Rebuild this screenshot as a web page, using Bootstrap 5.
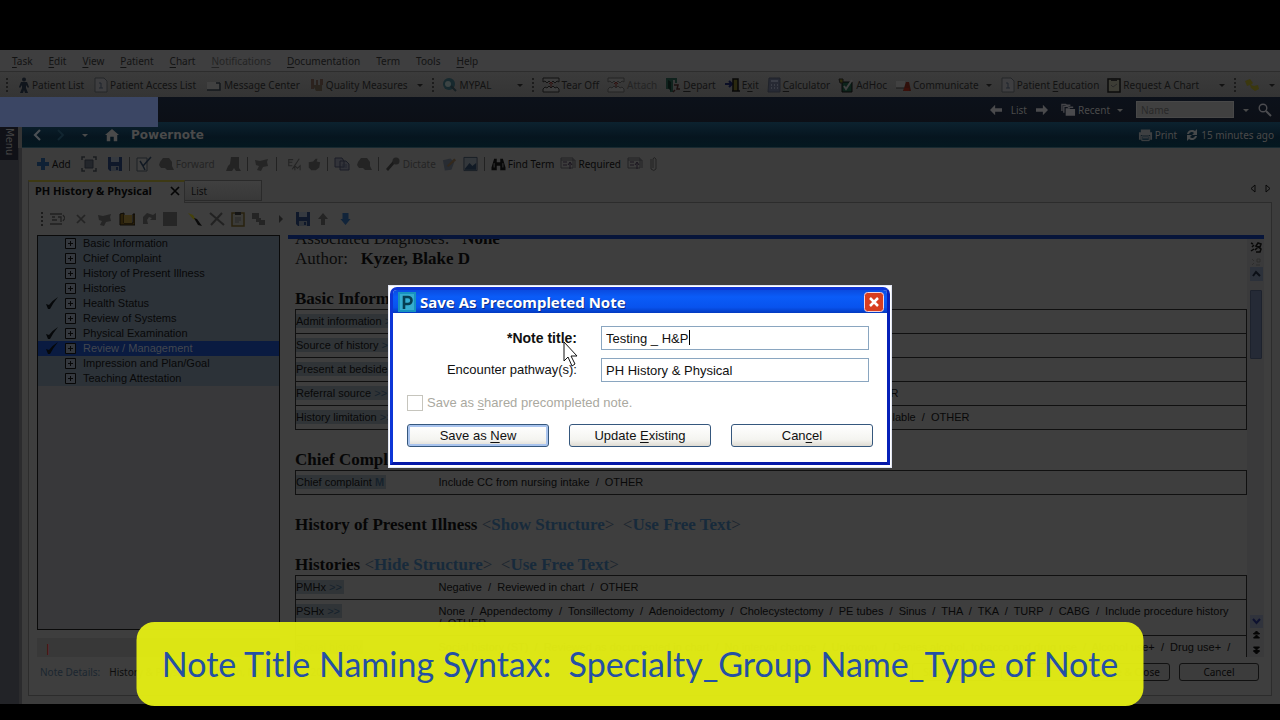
<!DOCTYPE html>
<html lang="en">
<head>
<meta charset="utf-8">
<meta name="viewport" content="width=device-width, initial-scale=1">
<title>Powernote</title>
<link href="https://cdn.jsdelivr.net/npm/bootstrap@5.3.0/dist/css/bootstrap.min.css" rel="stylesheet">
<style>
body{background:#000;color:#0d0d0d;font:10px/16px "Noto Sans",sans-serif}
svg{display:block;flex:none}
a{color:inherit;text-decoration:none}
u{text-underline-offset:2px}
button{font:inherit;color:inherit;background:none;border:0;padding:0}
.screen{padding:50px 0 13px}
.app{background:#343434}
.menubar{height:22px;padding:0 12px;gap:16px;background:#3e3e3f;border-bottom:1px solid #2d2d2d;color:#131313}
.toolbar-main{height:25px;padding:0 4px 0 6px;background:linear-gradient(#3b3b3b,#343434);color:#121212;gap:8px}
.toolbar-main button,.flat{display:flex;align-items:center;gap:2px;white-space:nowrap}
.quick{gap:10px}
.off{color:#242424}
.grip{width:2px;height:14px;border-left:2px dotted #1c1c1c;flex:none}
.chartbar{height:25px;background:linear-gradient(#0c111a,#0c0f16);color:#4a4a4a}
.patient{width:158px;height:30px;background:#3b4664;z-index:2;position:relative}
.find{width:98px;height:17px;border:1px solid #484848;background:#404040;color:#111;padding:0 4px;font-size:10px;border-radius:0}
.find::placeholder{color:#292929}
.titlebar{height:26px;background:linear-gradient(#0c222f,#06151f 60%,#041820);color:#4a4a4a;border-bottom:1px solid #182a31;margin-left:22px;padding:0 6px 0 11px}
.titlebar h1{font:bold 12px/16px "DejaVu Sans",sans-serif;margin:0 0 0 12px}
.side{width:22px;background:#222327;border-right:3px solid #2b2b2d}
.side button{writing-mode:vertical-rl;background:#101117;color:#444;width:18px;height:36px;margin-top:-24px;font:10px/18px "DejaVu Sans",sans-serif;position:relative}
.work{background:#3c3c3c;padding:0 8px 8px 6px;min-width:0}
.actions{height:32px;padding-left:8px;gap:6px;color:#080808}
.sep{width:1px;height:14px;background:#222;flex:none}
.tabs{height:23px}
.tab-on{border:1px solid #2c2c2c;border-top:2px solid #3d3914;border-bottom:0;width:157px;padding:0 3px 4px 6px;font-weight:bold;font-size:11px;background:#3e3e3e;color:#050505}
.tab-off{border:1px solid #2a2a2a;border-left:0;width:77px;padding-left:6px;height:21px;background:linear-gradient(#404040,#383838)}
.rule{border-bottom:1px solid #2c2c2c}
.panel{border:1px solid #2c2c2c;border-top:0;padding:0 7px 0 8px;background:#3e3e3e;height:493px}
.tools{height:32px;gap:6px;padding-left:4px}
.tree{width:243px;height:395px;border:1px solid #0a0a0a;background:#38383a;font:11px/15px "Liberation Sans",sans-serif}
.tree li{height:15px;background:#2c3238;color:#080808;padding-left:7px}
.tree li.picked{background:#0a1b41;color:#43474f}
.tick{width:14px;margin-right:6px}
.box{width:11px;height:11px;margin-right:7px}
.entry{height:19px;margin-top:8px;width:243px;border:0;background:#383838;color:#600;padding:0 8px}
.doc{height:422px;border-top:4px solid #07153a;overflow:hidden;margin-left:8px;min-width:0;background:#3e3e3e}
.sheet{padding-left:7px;min-width:0;overflow:hidden}
.serif{font:17px/20px "Liberation Serif",serif;color:#0b0b0b;margin:0;white-space:pre}
.serif b{color:#060606}
.scrolled{margin-top:-10px}
.heading{font:bold 17px/20px "Liberation Serif",serif;margin:20px 0 0;color:#060606;white-space:pre}
.heading span{font-weight:normal;color:#1a242e}
.heading a{color:#172a3b;font-weight:bold}
.facts{width:100%;border-collapse:collapse;font:11px/12px "Liberation Sans",sans-serif;color:#080808}
.facts tr{border:1px solid #101010}
.facts td,.facts th{font-weight:normal;padding:5px 0 6px;height:23px;vertical-align:top}
.facts th{width:143px}
.facts td{padding-right:6px;white-space:pre-wrap}
.term{background:#303437;padding:1px 2px 1px 0}
.term i{font-style:normal;color:#16222c}
.upto{display:inline-block;width:460px;text-align:right}
.upto-wide{display:inline-block;width:531px;text-align:right}
.scroller{width:17px;padding:2px 2px 0 3px;background:#3a3a3b}
.thumb{height:69px;background:#252a36;border-radius:1px;margin-top:9px;border:1px solid #1d222d}
.foot{height:29px;padding:0 5px 0 3px;gap:9px}
.note-label{color:#1b2630}
.btn-foot{width:80px;height:18px;border:1px solid #111;border-radius:3px;background:#3c3c3c;color:#080808;font-size:10px;line-height:14px}
.dialog{position:absolute;top:285px;left:50%;transform:translateX(-50%);width:504px;height:183px;background:#fff;border:1px solid #dfe4f2;z-index:5;font:13px/18px "Liberation Sans",sans-serif;color:#111}
.frame{margin:1px;border:3px solid #0d35d6;border-bottom-color:#0518a8;border-right-color:#0620b8;border-radius:7px 7px 0 0;height:178px;background:#fff}
.caption-bar{height:23px;background:linear-gradient(#0a4be0,#0a5cf8 30%,#0853ee 75%,#0339c0);color:#fff;font:bold 15px/20px "Noto Sans",sans-serif;text-shadow:1px 1px #0a2b88;border-radius:4px 4px 0 0;padding:0 3px 0 5px}
.form-body{padding:13px 14px 0}
.field{height:24px;width:268px;border:1px solid #8aa6c0;border-radius:0;padding:0 4px;font:13px/20px "Liberation Sans",sans-serif;color:#111;background:#fff}
.title-label{font-size:14px}
.caret{position:absolute;left:88px;top:4px;width:1px;height:15px;background:#000}
.btn-xp{width:142px;height:23px;border:1px solid #35577d;border-radius:3px;background:linear-gradient(#fff,#f4f4f0 70%,#dedbd3);font:13px/19px "Liberation Sans",sans-serif;color:#111;padding:0}
.btn-xp.default{box-shadow:inset 0 0 0 2px #a9c4ee}
.shared{color:#aaa9a0;margin:12px 0}
.shared input{appearance:none;width:16px;height:16px;border:1px solid #c6c5bd;background:#fff;margin:0}
.pointer{position:absolute;left:174px;top:55px}
.banner{position:absolute;top:622px;left:50%;transform:translateX(-50%);width:1007px;height:84px;border-radius:18px;background:rgba(226,235,20,.97);color:#2450a4;font:34px/84px Lato,sans-serif;text-align:center;white-space:pre;z-index:6;margin:0}
</style>
</head>
<body>
<svg width="0" height="0" class="position-absolute" aria-hidden="true">
<symbol id="person" viewBox="0 0 12 16"><circle cx="6" cy="2.500" r="2" fill="#10151c"/><path d="M3 5h6l2 5-1 1-2-3v3l2 5H7l-1-3-1 3H2l2-5V8l-2 3-1-1z" fill="#10151c"/></symbol>
<symbol id="page" viewBox="0 0 14 16"><path d="M1 1h9l3 3v11H1z" fill="#3e3e40" stroke="#242629"/><path d="M5 6h2v5M5 11h4" stroke="#1f242c" fill="none"/></symbol>
<symbol id="mail" viewBox="0 0 16 16"><path d="M1 5h12v8H1z" fill="#414141"/><path d="M1 13h13V6M10 6h4" stroke="#15181d" stroke-width="1.500" fill="none"/></symbol>
<symbol id="bars" viewBox="0 0 14 16"><path d="M1 2h3v10H1zM6 3h2v9H6zM10 2h3v6h-3z" fill="#2c221e"/><path d="M3 8h9v6H6z" fill="#29241e"/></symbol>
<symbol id="globe" viewBox="0 0 16 16"><circle cx="7" cy="7" r="6" fill="#17292e"/><circle cx="6" cy="7" r="3" fill="#3c4444"/><path d="M9 9l5 5" stroke="#172024" stroke-width="2"/></symbol>
<symbol id="tear" viewBox="0 0 18 16"><path d="M1 5V1h16v4l-2-1-2 2-2-2-2 2-2-2-2 2-2-2zM1 15v-3l2-2 2 1 2-2 2 2 2-2 2 2 2-1 2 2v3z" fill="#3d3d3d" stroke="currentColor"/><path d="M9 5v5M7 7l2-2 2 2" stroke="#30110f" fill="none"/></symbol>
<symbol id="depart" viewBox="0 0 16 16"><path d="M1 1h11v5h-2V3H8v12H5v-3H1z" fill="#10221d"/><path d="M3 3l3 2v9l-3-3z" fill="#07120f"/><path d="M9 8h4l-1 4h3M10 13l-2 2" stroke="#1c1010" stroke-width="1.500" fill="none"/></symbol>
<symbol id="exit" viewBox="0 0 16 16"><path d="M1 7h6M5 4l3 3-3 3" stroke="#0b0e26" stroke-width="2" fill="none"/><path d="M9 2h5v12H9zM8 14h8" fill="#2b290f" stroke="#080808" stroke-width="1.500"/></symbol>
<symbol id="calc" viewBox="0 0 14 16"><path d="M2 1h11v14H1z" fill="#272a34" stroke="#20232a"/><path d="M4 4h7M4 8h1M7 8h1M10 8h1M4 11h1M7 11h1M10 11h1" stroke="#41444c" stroke-width="1.500"/></symbol>
<symbol id="adhoc" viewBox="0 0 16 16"><path d="M4 5h10v10H4z" fill="#0d231a" stroke="#080808"/><path d="M6 9l2 3 6-9" stroke="#424242" stroke-width="2" fill="none"/><path d="M1 2h4v4H2z" fill="#2e2c0c" stroke="#111"/></symbol>
<symbol id="comm" viewBox="0 0 16 16"><path d="M1 4h9v7H1z" fill="#414141"/><path d="M1 11h8" stroke="#191919"/><path d="M8 14h8l-2-9h-3z" fill="#30100b"/><path d="M9 11h5v3H9z" fill="#3b100a"/></symbol>
<symbol id="clip" viewBox="0 0 14 16"><path d="M1 2h12v13H1z" fill="#3d3d35" stroke="#0b0b0b" stroke-width="1.500"/><path d="M4 1h6v3H4z" fill="#151515"/><path d="M4 8l2 2 4-3" stroke="#292929" fill="none"/></symbol>
<symbol id="key" viewBox="0 0 16 16"><path d="M1 4l5-2 3 4-2 2 3 1 4-1 1 4-4 2-4-3-1-3-3 1z" fill="#3b380f"/></symbol>
<symbol id="arrL" viewBox="0 0 16 14"><path d="M1 7l6-6v4h8v4H7v4z" fill="#4a4a4c"/></symbol>
<symbol id="folders" viewBox="0 0 16 14"><path d="M5 5h4l1 1h5v7H5z" fill="#4a4a4d"/><path d="M3 10V3h4l1 1h5M1 8V1h4l1 1h4" stroke="#444448" stroke-width="1.500" fill="none"/></symbol>
<symbol id="down" viewBox="0 0 8 8"><path d="M1 3h6L4 6z" fill="currentColor"/></symbol>
<symbol id="search" viewBox="0 0 14 14"><circle cx="5" cy="5" r="3.800" fill="none" stroke="#4c4c50" stroke-width="1.400"/><path d="M8 8l5 5" stroke="#4c4c50" stroke-width="2"/></symbol>
<symbol id="home" viewBox="0 0 16 14"><path d="M8 0l8 7h-2v7h-4V9H6v5H2V7H0z" fill="#4a4a4a"/></symbol>
<symbol id="printer" viewBox="0 0 16 14"><path d="M3 4V1h10v3h2v8h-2V7H3v5H1V4z" fill="#3e4042"/><path d="M4 8h8v5H4zM5 10h6" fill="#12212b" stroke="#444"/></symbol>
<symbol id="refresh" viewBox="0 0 14 14"><path d="M2 6a5 5 0 0 1 8-3l2-2v6H7l2-2a3 3 0 0 0-5 1zM12 8a5 5 0 0 1-8 3l-2 2V7h5L5 9a3 3 0 0 0 5-1z" fill="#46494b"/></symbol>
<symbol id="plus" viewBox="0 0 14 14"><path d="M5 1h4v4h4v4H9v4H5V9H1V5h4z" fill="#0f2135"/></symbol>
<symbol id="fit" viewBox="0 0 16 16"><path d="M1 4V1h3M12 1h3v3M15 12v3h-3M4 15H1v-3" stroke="#1a1c1f" fill="none" stroke-width="1.500"/><path d="M4 4h8v8H4z" fill="#23262b" stroke="#181b20"/></symbol>
<symbol id="disk" viewBox="0 0 16 16"><path d="M1 1h14v14H3l-2-2z" fill="#0f182a"/><path d="M4 1h8v5H4z" fill="#363a40"/><path d="M4 10h8v5H4z" fill="#30343a"/><path d="M9 11h2v3H9z" fill="#0f182a"/></symbol>
<symbol id="edit" viewBox="0 0 16 16"><path d="M1 2h10v13H1z" fill="#404040" stroke="#1c2025"/><path d="M4 5l3 5 8-9M7 10l2 4" stroke="#111923" stroke-width="1.500" fill="none"/></symbol>
<symbol id="bubble" viewBox="0 0 16 16"><path d="M2 6l3-4h6l3 4v4l2 4H9l-2-2H3L1 9z" fill="#242424"/></symbol>
<symbol id="stamp" viewBox="0 0 16 16"><path d="M6 1h8v11l2 3h-5l-2-3-2 3H1l2-5 2-2z" fill="#232323"/></symbol>
<symbol id="flag" viewBox="0 0 16 16"><path d="M1 4l5 1 8-2-1 3 1 4-5 1-2 4-4-1 2-4-3-1z" fill="#252525"/></symbol>
<symbol id="em" viewBox="0 0 16 16"><path d="M7 3H2v7h4M2 6h4M14 2L6 14M9 15v-5l3 3 3-3v5" stroke="#242424" stroke-width="1.200" fill="none"/></symbol>
<symbol id="apple" viewBox="0 0 16 16"><path d="M2 6l5-1 3-3h2l-1 3 4 1-1 6-4 3H5l-3-3z" fill="#242424"/></symbol>
<symbol id="copy" viewBox="0 0 16 16"><path d="M1 2h7l2 3v6H1zM6 5h6l3 3v6H6z" fill="#323339" stroke="#1a1d26"/><path d="M8 9h5M8 11h5" stroke="#222631"/></symbol>
<symbol id="mic" viewBox="0 0 16 16"><path d="M1 13l7-8 2 2-7 8z" fill="#1b1b1b"/><circle cx="11" cy="5" r="3.500" fill="#222"/></symbol>
<symbol id="paint" viewBox="0 0 16 16"><path d="M1 4l8-2 4 4-3 8-7 1z" fill="#282c32"/><path d="M5 10L13 2l2 2-8 7z" fill="#33291d"/></symbol>
<symbol id="photo" viewBox="0 0 16 16"><path d="M1 1h14v14H1z" fill="#33373b" stroke="#191e25"/><path d="M2 13l5-6 3 3 4-3v7H2z" fill="#111a25"/></symbol>
<symbol id="binoc" viewBox="0 0 16 16"><path d="M3 2h3v4h4V2h3l3 10v3h-6v-5H6v5H0v-3z" fill="#080808"/><path d="M3 7v5M13 7v5" stroke="#3a3a3a"/></symbol>
<symbol id="req" viewBox="0 0 16 16"><path d="M1 2h12v10H1zM1 4h14v8" fill="none" stroke="#222224"/><path d="M3 6h4M3 9h4M10 13V7M8 9l2-3 2 3" stroke="#1a151f" fill="none"/></symbol>
<symbol id="pin" viewBox="0 0 10 16"><path d="M2 3v10q3 3 5 0V3Q5 0 4 3v9" fill="none" stroke="#222"/></symbol>
<symbol id="x" viewBox="0 0 12 12"><path d="M2 2l8 8M10 2l-8 8" stroke="currentColor" stroke-width="1.700"/></symbol>
<symbol id="gold" viewBox="0 0 16 16"><path d="M1 3l4-1v10h9V3h2v11H1z" fill="#2b210a" stroke="#0d0b06"/><path d="M5 4h8v8H5z" fill="#3a3015"/></symbol>
<symbol id="redo" viewBox="0 0 16 16"><path d="M2 13V6l4-4 6 2 3-2v7H9l2-2-3-1-2 3 1 4z" fill="#252525"/></symbol>
<symbol id="wand" viewBox="0 0 16 16"><path d="M1 2l5 2 3 5-3-1z" fill="#45420b"/><path d="M7 7l3 1 5 7-4-1z" fill="#0a0a0a"/></symbol>
<symbol id="cut" viewBox="0 0 16 16"><path d="M1 2l14 12M13 2L2 14" stroke="#222" stroke-width="2"/></symbol>
<symbol id="note" viewBox="0 0 14 16"><path d="M1 2h12v13H1z" fill="#3b3b38" stroke="#2a230f" stroke-width="1.500"/><path d="M4 1h6v3H4z" fill="#151515"/><path d="M4 7h6M4 9h6M4 11h4" stroke="#292929"/></symbol>
<symbol id="blocks" viewBox="0 0 16 16"><path d="M1 2h7v6H1zM8 9h6v5H8zM5 7h5v4H5z" fill="#242424"/></symbol>
<symbol id="up" viewBox="0 0 12 14"><path d="M6 1l5 6H8v6H4V7H1z" fill="currentColor"/></symbol>
<symbol id="check" viewBox="0 0 14 13"><path d="M1 7l3 1q4-5 9-8Q8 6 5 12L3 12z" fill="#06080a"/></symbol>
<symbol id="expand" viewBox="0 0 11 11"><path d="M.5.5h10v10H.5z" fill="#34383e" stroke="#070707"/><path d="M3 5.500h5M5.500 3v5" stroke="#070707"/></symbol>
<symbol id="structure" viewBox="0 0 16 16"><path d="M1 3h12M1 13h12M3 6h3M3 9h5M9 6h3v5M14 4l2 3-2 3" stroke="#202020" fill="none" stroke-width="1.300"/></symbol>
</svg>

<main class="screen position-relative">
<div class="app">
<nav class="menubar d-flex align-items-center">
<a href="#"><u>T</u>ask</a><a href="#"><u>E</u>dit</a><a href="#"><u>V</u>iew</a><a href="#"><u>P</u>atient</a><a href="#"><u>C</u>hart</a><a href="#" class="off"><u>N</u>otifications</a><a href="#"><u>D</u>ocumentation</a><a href="#">Term</a><a href="#">Tools</a><a href="#"><u>H</u>elp</a>
</nav>
<div class="toolbar-main d-flex align-items-center">
<div class="quick d-flex align-items-center">
<span class="grip"></span>
<button><svg width="12" height="16"><use href="#person"/></svg>Patient List</button>
<button><svg width="14" height="16"><use href="#page"/></svg>Patient Access List</button>
<button><svg width="16" height="16"><use href="#mail"/></svg>Message Center</button>
<button><svg width="14" height="16"><use href="#bars"/></svg>Quality Measures</button>
</div>
<svg width="8" height="8"><use href="#down"/></svg><span class="grip"></span>
<button class="me-3"><svg width="16" height="16"><use href="#globe"/></svg>MYPAL</button>
<svg width="8" height="8"><use href="#down"/></svg><span class="grip"></span>
<button><svg width="18" height="16"><use href="#tear"/></svg>Tear Off</button>
<button class="off"><svg width="18" height="16"><use href="#tear"/></svg>Attach</button>
<button><svg width="16" height="16"><use href="#depart"/></svg><span><u>D</u>epart</span></button>
<button><svg width="16" height="16"><use href="#exit"/></svg><span>E<u>x</u>it</span></button>
<button><svg width="14" height="16"><use href="#calc"/></svg><span><u>C</u>alculator</span></button>
<button><svg width="16" height="16"><use href="#adhoc"/></svg>AdHoc</button>
<button><svg width="16" height="16"><use href="#comm"/></svg>Communicate<svg class="ms-1" width="8" height="8"><use href="#down"/></svg></button>
<button><svg width="14" height="16"><use href="#page"/></svg><span>Patient <u>E</u>ducation</span></button>
<button><svg width="14" height="16"><use href="#clip"/></svg>Request A Chart</button>
<svg class="ms-auto" width="8" height="8"><use href="#down"/></svg><span class="grip"></span>
<svg width="16" height="16"><use href="#key"/></svg><svg width="8" height="8"><use href="#down"/></svg>
</div>
<div class="chartbar d-flex justify-content-between">
<div class="patient"></div>
<div class="d-flex align-items-center gap-2 pe-2">
<button class="flat gap-2"><svg width="14" height="12"><use href="#arrL"/></svg>List<svg width="14" height="12" viewBox="0 0 16 14"><path d="M15 7L9 1v4H1v4h8v4z" fill="#4a4a4c"/></svg></button>
<button class="flat ms-1"><svg width="15" height="14"><use href="#folders"/></svg>Recent<svg class="ms-1" width="8" height="8"><use href="#down"/></svg></button>
<input class="find ms-1" type="search" placeholder="Name" aria-label="Name">
<svg width="8" height="8"><use href="#down"/></svg><svg width="14" height="14"><use href="#search"/></svg>
</div>
</div>
<div class="titlebar d-flex align-items-center">
<svg width="8" height="12" viewBox="0 0 8 12"><path d="M7 1L2 6l5 5" stroke="#4c5054" stroke-width="2.200" fill="none"/></svg>
<svg class="ms-3" width="8" height="12" viewBox="0 0 8 12"><path d="M1 1l5 5-5 5" stroke="#112530" stroke-width="2" fill="none"/></svg>
<svg class="ms-3" width="8" height="8"><use href="#down"/></svg>
<svg class="ms-3" width="14" height="14"><use href="#home"/></svg>
<h1>Powernote</h1>
<button class="flat ms-auto me-2"><svg width="15" height="14"><use href="#printer"/></svg>Print</button>
<button class="flat"><svg width="14" height="14"><use href="#refresh"/></svg>15 minutes ago</button>
</div>
<div class="d-flex">
<aside class="side flex-shrink-0"><button>Menu</button></aside>
<section class="work flex-grow-1">
<div class="actions d-flex align-items-center">
<button class="flat"><svg width="14" height="14"><use href="#plus"/></svg>Add</button>
<svg class="ms-1" width="16" height="16"><use href="#fit"/></svg><svg class="ms-1" width="16" height="16"><use href="#disk"/></svg><span class="sep"></span>
<svg width="16" height="16"><use href="#edit"/></svg>
<button class="flat off"><svg width="16" height="16"><use href="#bubble"/></svg>Forward</button>
<svg class="ms-1" width="16" height="16"><use href="#stamp"/></svg><span class="sep"></span><svg width="16" height="16"><use href="#flag"/></svg><span class="sep"></span>
<svg class="ms-1" width="14" height="16"><use href="#em"/></svg><svg width="14" height="16"><use href="#apple"/></svg><span class="sep"></span>
<svg width="16" height="16"><use href="#copy"/></svg><svg width="16" height="16"><use href="#bubble"/></svg><span class="sep"></span>
<button class="flat off"><svg width="16" height="16"><use href="#mic"/></svg>Dictate</button>
<svg width="15" height="16"><use href="#paint"/></svg><svg width="15" height="16"><use href="#photo"/></svg><span class="sep"></span>
<button class="flat"><svg width="15" height="14"><use href="#binoc"/></svg>Find Term</button>
<button class="flat"><svg width="16" height="16"><use href="#req"/></svg>Required</button>
<svg width="16" height="16"><use href="#req"/></svg><svg width="10" height="16"><use href="#pin"/></svg>
</div>
<div class="tabs d-flex">
<div class="tab-on d-flex align-items-center justify-content-between"><span>PH History &amp; Physical</span><button class="flat" aria-label="Close tab"><svg width="12" height="12"><use href="#x"/></svg></button></div>
<div class="rule flex-grow-1 d-flex"><div class="tab-off d-flex align-items-center">List</div>
<svg class="ms-auto mt-1" width="22" height="10" viewBox="0 0 22 10"><path d="M5 1v7L1 4.500zM16 1v7l4-3.500z" fill="none" stroke="#080808"/></svg></div>
</div>
<div class="panel">
<div class="tools d-flex align-items-center">
<span class="grip"></span><svg width="16" height="16"><use href="#structure"/></svg>
<svg class="off ms-1" width="12" height="12"><use href="#x"/></svg><svg class="ms-1" width="16" height="16"><use href="#flag"/></svg><svg width="16" height="16"><use href="#gold"/></svg><svg width="16" height="16"><use href="#redo"/></svg>
<svg width="14" height="14" viewBox="0 0 14 14"><path d="M0 0h14v14H0z" fill="#262626"/></svg>
<svg class="ms-1" width="16" height="16"><use href="#wand"/></svg><svg width="16" height="16"><use href="#cut"/></svg><svg width="14" height="16"><use href="#note"/></svg><svg width="16" height="16"><use href="#blocks"/></svg>
<svg class="ms-1" width="8" height="10" viewBox="0 0 8 10"><path d="M2 1l4 4-4 4z" fill="#1d1d1d"/></svg>
<svg class="ms-1" width="16" height="16"><use href="#disk"/></svg><svg class="off" width="12" height="14"><use href="#up"/></svg>
<svg class="ms-1" width="13" height="14" viewBox="0 0 12 14"><path d="M6 13l5-6H9V1H3v6H1z" fill="#11243a"/></svg>
</div>
<div class="d-flex">
<div class="flex-shrink-0">
<ul class="tree list-unstyled mb-0" id="tree"></ul>
<input class="entry d-block" aria-label="Free text" value="|">
</div>
<div class="doc flex-grow-1 d-flex">
<div class="sheet flex-grow-1">
<p class="serif scrolled">Associated Diagnoses:   <b>None</b></p>
<p class="serif">Author:   <b>Kyzer, Blake D</b></p>
<h2 class="heading">Basic Information</h2>
<table class="facts">
<tr><th><span class="term">Admit information <i>&gt;&gt;</i></span></th><td></td></tr>
<tr><th><span class="term">Source of history <i>&gt;&gt;</i></span></th><td></td></tr>
<tr><th><span class="term">Present at bedside <i>&gt;&gt;</i></span></th><td></td></tr>
<tr><th><span class="term">Referral source <i>&gt;&gt;</i></span></th><td><span class="upto">OTHER</span></td></tr>
<tr><th><span class="term">History limitation <i>&gt;&gt;</i></span></th><td><span class="upto-wide">Not available  /  OTHER</span></td></tr>
</table>
<h2 class="heading">Chief Complaint</h2>
<table class="facts"><tr><th><span class="term">Chief complaint <b><i>M</i></b></span></th><td>Include CC from nursing intake  /  OTHER</td></tr></table>
<h2 class="heading">History of Present Illness <span>&lt;<a href="#">Show Structure</a>&gt;  &lt;<a href="#">Use Free Text</a>&gt;</span></h2>
<h2 class="heading">Histories <span>&lt;<a href="#">Hide Structure</a>&gt;  &lt;<a href="#">Use Free Text</a>&gt;</span></h2>
<table class="facts">
<tr><th><span class="term">PMHx <i>&gt;&gt;</i></span></th><td>Negative  /  Reviewed in chart  /  OTHER</td></tr>
<tr><th><span class="term">PSHx <i>&gt;&gt;</i></span></th><td>None  /  Appendectomy  /  Tonsillectomy  /  Adenoidectomy  /  Cholecystectomy  /  PE tubes  /  Sinus  /  THA  /  TKA  /  TURP  /  CABG  /  Include procedure history
/  OTHER</td></tr>
<tr><th><span class="term">Social history</span></th><td>Social history (ST)  /  Reviewed as documented in chart  /  No interval change  /  Unknown  /  Denies alcohol, tobacco and drug use  /  Alcohol use+  /  Drug use+  /</td></tr>
</table>
</div>
<div class="scroller flex-shrink-0 d-flex flex-column">
<svg width="12" height="12" viewBox="0 0 12 12"><path d="M1 2l2 1M2 6l2-2M1 10l3-2M6 5l2-3 3 1-1 3zM5 9l3-3 3 2-1 3H6" stroke="#080808" stroke-width="1.500" fill="none"/></svg>
<svg class="mt-1" width="12" height="10" viewBox="0 0 12 10"><path d="M2 2l2 2M2 8l2-2M7 2h3v3H7zM6 8h4" stroke="#2d2d2d" fill="none"/></svg>
<svg width="13" height="14" viewBox="0 0 13 14"><path d="M0 0h13v14H0z" fill="#2c313a"/><path d="M3 9l3-4 4 4" stroke="#0b0f16" stroke-width="2" fill="none"/></svg>
<div class="thumb"></div>
<svg class="mt-auto" width="13" height="42" viewBox="0 0 13 42"><path d="M0 0h13v13H0z" fill="#30333c"/><path d="M3 4l3.500 4L10 4" stroke="#0e1230" stroke-width="2" fill="none"/><path d="M6.500 16l3 3h-6zM6.500 20l3 3h-6zM3.500 18.500h6M6.500 35l3-3h-6zM6.500 39l3-3h-6zM3.500 35.500h6" fill="#050505" stroke="#050505"/></svg>
</div>
</div>
</div>
<div class="foot d-flex align-items-center">
<span class="note-label">Note Details:</span><span>History &amp; Physical, Physician, Note Details, 2010</span>
<button class="btn-foot ms-auto">Sign/Submit</button><button class="btn-foot">Save</button><button class="btn-foot">Save &amp; Close</button><button class="btn-foot">Cancel</button>
</div>
</div>
</section>
</div>
</div>

<form class="dialog" role="dialog" aria-labelledby="dialog-title">
<div class="frame">
<div class="caption-bar d-flex align-items-center gap-1">
<svg width="18" height="20" viewBox="0 0 18 20"><path d="M0 0h18v20H0z" fill="#1693bf"/><path d="M2 2h14v16H2z" fill="#36acd0"/><path d="M6 17V5h4a3 3 0 0 1 0 7H6" stroke="#063d52" stroke-width="2.600" fill="none"/></svg>
<span id="dialog-title">Save As Precompleted Note</span>
<button type="button" class="ms-auto" aria-label="Close"><svg width="20" height="20" viewBox="0 0 20 20"><rect x=".5" y=".5" width="19" height="19" rx="3" fill="#d83e20" stroke="#f3d5dd"/><path d="M6 6l8 8M14 6l-8 8" stroke="#fff" stroke-width="2.500"/></svg></button>
</div>
<div class="form-body">
<div class="d-flex justify-content-end align-items-center mb-2 pe-1"><label class="title-label fw-bold me-4" for="title">*Note title:</label><div class="position-relative"><input class="field d-block" id="title" value="Testing _ H&amp;P"><span class="caret"></span></div></div>
<div class="d-flex justify-content-end align-items-center pe-1"><label class="me-4" for="path">Encounter pathway(s):</label><input class="field" id="path" value="PH History &amp; Physical"></div>
<div class="shared d-flex align-items-center gap-1"><input type="checkbox" id="shared" disabled><label for="shared">Save as <u>s</u>hared precompleted note.</label></div>
<div class="d-flex justify-content-between"><button type="button" class="btn-xp default">Save as <u>N</u>ew</button><button type="button" class="btn-xp">Update <u>E</u>xisting</button><button type="button" class="btn-xp">Can<u>c</u>el</button></div>
</div>
</div>
<svg class="pointer" width="16" height="26" viewBox="0 0 16 26"><path d="M1 1v19l4-4 4 9 3-2-4-8h6z" fill="#fff" stroke="#111"/></svg>
</form>
<p class="banner">Note Title Naming Syntax:  Specialty_Group Name_Type of Note</p>
</main>
<script>
const items=[["Basic Information"],["Chief Complaint"],["History of Present Illness"],["Histories"],["Health Status",1],["Review of Systems"],["Physical Examination",1],["Review / Management",1,"picked"],["Impression and Plan/Goal"],["Teaching Attestation"]];
document.getElementById("tree").innerHTML=items.map(([name,done,cls])=>`<li class="d-flex align-items-center ${cls||""}"><span class="tick">${done?'<svg width="14" height="13"><use href="#check"/></svg>':""}</span><svg class="box"><use href="#expand"/></svg>${name}</li>`).join("");
</script>
<script src="https://cdn.jsdelivr.net/npm/bootstrap@5.3.0/dist/js/bootstrap.bundle.min.js"></script>
</body>
</html>
